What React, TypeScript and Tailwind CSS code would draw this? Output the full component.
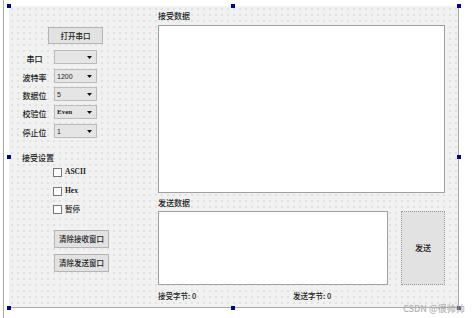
import React from 'react';

const cjk = "font-['Noto_Sans_CJK_SC','Noto_Sans',sans-serif] font-medium";

function Handle({ className }: { className: string }) {
    return <div className={`absolute w-[4px] h-[4px] bg-[#000080] ${className}`} />;
}

function Combo({ value, mono }: { value: string; mono?: boolean }) {
    return (
        <div className="w-[43px] h-[14px] flex items-center justify-between bg-[#e5e5e5] border border-[#bcbcbc] pl-[2px] pr-[4px]">
            <span
                className={`text-[7px] leading-none text-[#222] ${
                    mono ? "font-['Liberation_Serif',serif] font-bold" : "font-['Liberation_Sans',sans-serif]"
                }`}
            >
                {value}
            </span>
            <svg width="5" height="3" viewBox="0 0 5 3">
                <path d="M0 0h5L2.5 3z" fill="#111" />
            </svg>
        </div>
    );
}

function FieldRow({ label, value, mono, mt }: { label: string; value: string; mono?: boolean; mt: string }) {
    return (
        <div className={`flex items-center ml-[13px] ${mt}`}>
            <span className={`w-[25px] text-center text-[8px] leading-none text-[#222] pt-[4px] ${cjk}`}>{label}</span>
            <div className="ml-[7px]">
                <Combo value={value} mono={mono} />
            </div>
        </div>
    );
}

function Check({ label, mt, cjkLabel }: { label: string; mt: string; cjkLabel?: boolean }) {
    return (
        <div className={`flex items-center ml-[44px] h-[10px] ${mt}`}>
            <div className="w-[9px] h-[9px] bg-white border border-[#777]" />
            <span
                className={`ml-[3px] text-[7.5px] leading-none text-[#222] ${
                    cjkLabel ? cjk : "font-['Liberation_Serif',serif] font-bold"
                }`}
            >
                {label}
            </span>
        </div>
    );
}

function Btn({ label, className }: { label: string; className: string }) {
    return (
        <div
            className={`flex items-center justify-center bg-[#e2e2e2] border border-[#b5b5b5] text-[7.5px] leading-none text-[#222] ${cjk} ${className}`}
        >
            {label}
        </div>
    );
}

export default function App() {
    return (
        <div className="relative w-[474px] h-[318px] bg-white overflow-hidden">
            <div className="absolute left-[3px] top-0 bottom-0 w-px bg-[#a8a8a8]" />
            <div className="pt-[6px] pl-[9px]">
                <div className="w-[450px] h-[302px] flex border-r border-b border-[#a8a8a8] bg-[#f1f1f1] bg-[radial-gradient(#cfcfd4_0.6px,transparent_0.8px)] bg-[size:6px_6px]">
                    {/* left column */}
                    <div className="w-[149px] flex flex-col">
                        <Btn label="打开串口" className="mt-[21px] ml-[39px] w-[55px] h-[17px]" />
                        <FieldRow label="串口" value="" mt="mt-[6px]" />
                        <FieldRow label="波特率" value="1200" mt="mt-[5px]" />
                        <FieldRow label="数据位" value="5" mt="mt-[4px]" />
                        <FieldRow label="校验位" value="Even" mono mt="mt-[4px]" />
                        <FieldRow label="停止位" value="1" mt="mt-[5px]" />
                        <span className={`mt-[16px] ml-[13px] h-[10px] text-[8px] leading-none text-[#222] ${cjk}`}>接受设置</span>
                        <Check label="ASCII" mt="mt-[3px]" />
                        <Check label="Hex" mt="mt-[9px]" />
                        <Check label="暂停" cjkLabel mt="mt-[8px]" />
                        <Btn label="清除接收窗口" className="mt-[16px] ml-[45px] w-[55px] h-[18px]" />
                        <Btn label="清除发送窗口" className="mt-[6px] ml-[45px] w-[55px] h-[18px]" />
                    </div>
                    {/* right column */}
                    <div className="flex-1 flex flex-col">
                        <span className={`mt-[6px] h-[10px] text-[8px] leading-none text-[#222] ${cjk}`}>接受数据</span>
                        <div className="mt-[3px] w-[287px] h-[168px] bg-white border border-[#a0a0a0]" />
                        <span className={`mt-[6px] h-[10px] text-[8px] leading-none text-[#222] ${cjk}`}>发送数据</span>
                        <div className="mt-[2px] flex h-[74px]">
                            <div className="w-[230px] h-full bg-white border border-[#a0a0a0]" />
                            <div
                                className={`ml-[13px] w-[44px] h-full flex items-center justify-center bg-[#e2e2e2] border border-dotted border-[#9a9a9a] text-[8px] text-[#222] ${cjk}`}
                            >
                                发送
                            </div>
                        </div>
                        <div className={`mt-[7px] flex text-[7.5px] leading-none text-[#222] ${cjk}`}>
                            <span className="w-[135px]">接受字节: 0</span>
                            <span>发送字节: 0</span>
                        </div>
                    </div>
                </div>
            </div>
            <Handle className="left-[7px] top-[4px]" />
            <Handle className="left-[231px] top-[4px]" />
            <Handle className="left-[457px] top-[4px]" />
            <Handle className="left-[7px] top-[155px]" />
            <Handle className="left-[457px] top-[155px]" />
            <Handle className="left-[7px] top-[306px]" />
            <Handle className="left-[231px] top-[306px]" />
            <Handle className="left-[457px] top-[306px]" />
            <span className={`absolute left-[403px] top-[304px] text-[9px] leading-none text-[#b0b0b0] ${cjk}`}>
                CSDN @很帅帅
            </span>
        </div>
    );
}
